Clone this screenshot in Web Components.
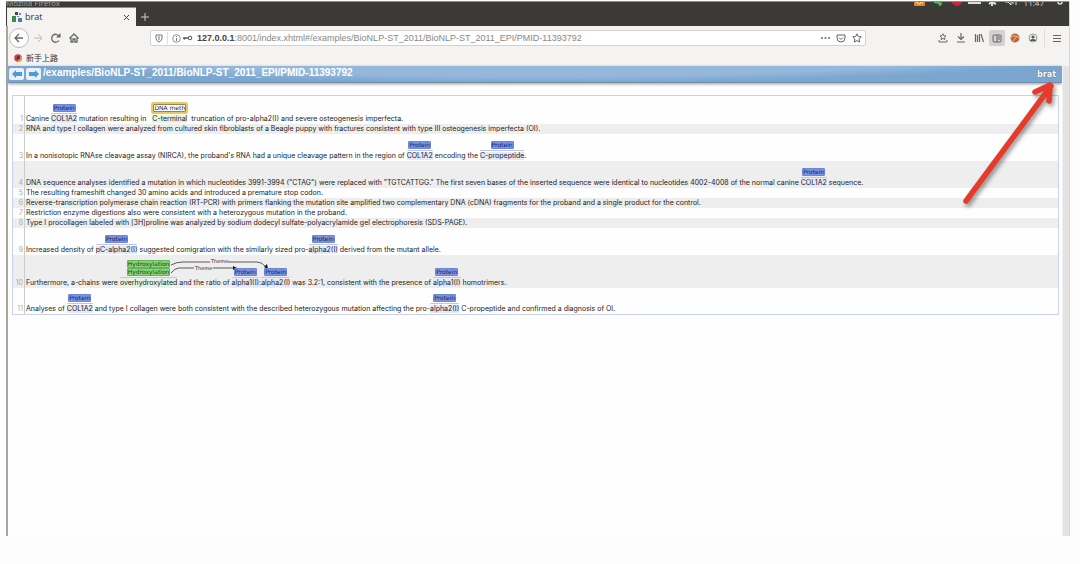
<!DOCTYPE html>
<html lang="en">
<head>
<meta charset="utf-8">
<title>brat</title>
<style>
html{background:#fdfdfd}
body{margin:0;background:#fdfdfd;font-family:"Liberation Sans",Arial,sans-serif;color:#222}
</style>
</head>
<body>
<browser-window>
  <status-strip slot="chrome"></status-strip>
  <tab-strip slot="chrome">brat</tab-strip>
  <nav-bar slot="chrome" host="127.0.0.1" path=":8001/index.xhtml#/examples/BioNLP-ST_2011/BioNLP-ST_2011_EPI/PMID-11393792"></nav-bar>
  <bookmark-bar slot="chrome">新手上路</bookmark-bar>
  <brat-header>/examples/BioNLP-ST_2011/BioNLP-ST_2011_EPI/PMID-11393792</brat-header>
  <brat-document>
    <doc-line n="1" size="first">Canine <span-mark tag="Protein">COL1A2</span-mark> mutation resulting in <span-mark tag="DNA meth" kind="selected">C-terminal</span-mark> truncation of pro-alpha2(I) and severe osteogenesis imperfecta.</doc-line>
    <doc-line n="2">RNA and type I collagen were analyzed from cultured skin fibroblasts of a Beagle puppy with fractures consistent with type III osteogenesis imperfecta (OI).</doc-line>
    <doc-line n="3" size="tagged">In a nonisotopic RNAse cleavage assay (NIRCA), the proband's RNA had a unique cleavage pattern in the region of <span-mark tag="Protein">COL1A2</span-mark> encoding the <span-mark tag="Protein">C-propeptide</span-mark>.</doc-line>
    <doc-line n="4" size="tagged">DNA sequence analyses identified a mutation in which nucleotides 3991-3994 ("CTAG") were replaced with "TGTCATTGG." The first seven bases of the inserted sequence were identical to nucleotides 4002-4008 of the normal canine <span-mark tag="Protein">COL1A2</span-mark> sequence.</doc-line>
    <doc-line n="5">The resulting frameshift changed 30 amino acids and introduced a premature stop codon.</doc-line>
    <doc-line n="6">Reverse-transcription polymerase chain reaction (RT-PCR) with primers flanking the mutation site amplified two complementary DNA (cDNA) fragments for the proband and a single product for the control.</doc-line>
    <doc-line n="7">Restriction enzyme digestions also were consistent with a heterozygous mutation in the proband.</doc-line>
    <doc-line n="8">Type I procollagen labeled with [3H]proline was analyzed by sodium dodecyl sulfate-polyacrylamide gel electrophoresis (SDS-PAGE).</doc-line>
    <doc-line n="9" size="tagged">Increased density of <span-mark tag="Protein">pC-alpha2(I)</span-mark> suggested comigration with the similarly sized pro-<span-mark tag="Protein">alpha2(I)</span-mark> derived from the mutant allele.</doc-line>
    <doc-line n="10" size="arcs">Furthermore, a-chains were <span-mark tag="Hydroxylation" kind="event">overhydroxylated</span-mark> and the ratio of <span-mark tag="Protein">alpha1(I)</span-mark>:<span-mark tag="Protein">alpha2(I)</span-mark> was 3.2:1, consistent with the presence of <span-mark tag="Protein">alpha1(I)</span-mark> homotrimers.</doc-line>
    <doc-line n="11" size="last">Analyses of <span-mark tag="Protein">COL1A2</span-mark> and type I collagen were both consistent with the described heterozygous mutation affecting the pro-<span-mark tag="Protein">alpha2(I)</span-mark> C-propeptide and confirmed a diagnosis of OI.</doc-line>
  </brat-document>
</browser-window>
<pointer-arrow></pointer-arrow>

<script>
const define = (name, html, setup) => customElements.define(name, class extends HTMLElement {
  connectedCallback() {
    if (this.shadowRoot) return;
    const t = document.createElement('template');
    t.innerHTML = html;
    this.attachShadow({mode: 'open'}).append(t.content.cloneNode(true));
    if (setup) setup(this, this.shadowRoot);
  }
});

define('browser-window', `
<style>
:host{display:flex;flex-direction:column;margin:1px 10px 28px 6px;min-height:calc(100vh - 29px)}
.frame{flex:1;display:flex;flex-direction:column;border-left:2px solid #aaa69e;border-right:1px solid #f3cdb6}
.view{flex:1;display:flex;background:#fefefe}
main{flex:1;min-width:0}
.scroll{width:6px;background:#e5e3e2;border-left:1px solid #f1f0ef}
</style>
<div class="frame"><slot name="chrome"></slot>
<div class="view"><main><slot></slot></main><div class="scroll"></div></div></div>`);

define('status-strip', `
<style>
:host{display:block;background:#3b3a36;border-top:1px solid #8f8e8b;margin-left:-2px}
.row{display:flex;align-items:flex-end;height:4px;overflow:hidden;font:8px/6px "Open Sans","Noto Sans",sans-serif;color:#aaa8a2;padding-right:5px}
.name{flex:1}
.clock{margin:0 12px 0 6px;color:#ddd}
svg{display:block;overflow:hidden}
</style>
<div class="row"><span class="name">Mozilla Firefox</span>
<svg width="104" height="4" viewBox="0 0 104 4"><rect width="11" height="4" rx="1" fill="#e9862b"/><path d="M2 0l3 2 4-2" stroke="#ffe0b0" fill="none"/><path d="M20 0l5 1 1 3M24 0l4 2" stroke="#48bb52" stroke-width="2" fill="none"/><path d="M37 0h11q-2 4-5 4t-6-4" fill="#cf2434"/><path d="M54 0h13v2H54z" fill="#ddd"/><path d="M78 0v4M75 2l3-2 4 2" stroke="#ddd" stroke-width="2" fill="none"/><path d="M91 0h3l3 3V0M99 0v2M102 0v3" stroke="#ddd" fill="none"/></svg>
<span class="clock">11:47</span>
<svg width="8" height="4" viewBox="0 0 8 4"><circle cx="4" cy="0" r="2" fill="none" stroke="#ddd" stroke-width="1.500"/></svg></div>`);

define('tab-strip', `
<style>
:host{display:flex;align-items:flex-end;height:20px;background:#3b3a36;margin-left:-2px;font:9px/12px "Open Sans","Noto Sans",sans-serif;color:#333}
.tab{display:flex;align-items:center;box-sizing:border-box;width:129px;height:19px;background:#f4f3f2;border-top:1px solid #cf7750;margin-left:1px;padding:0 6px 0 5px;gap:3px}
.name{flex:1}
button{display:flex;padding:0;border:0;background:none}
.add{margin:0 0 5px 5px}
</style>
<div class="tab">
<svg width="10" height="10" viewBox="0 0 10 10"><path d="M3 0h3v3H3z" fill="#445"/><path d="M0 4h4v6H0z" fill="#3b8a4a"/><path d="M6 6h4v4H6z" fill="#477da0"/><path d="M7 1h2v2H7zM5 4h2v1H5z" fill="#789"/></svg>
<span class="name"><slot></slot></span>
<button aria-label="Close tab"><svg width="7" height="7" viewBox="0 0 7 7"><path d="M1 1l5 5M6 1L1 6" stroke="#444"/></svg></button>
</div>
<button class="add" aria-label="New tab"><svg width="8" height="8" viewBox="0 0 8 8"><path d="M4 0v8M0 4h8" stroke="#ccc"/></svg></button>`);

define('nav-bar', `
<style>
:host{display:flex;align-items:center;height:24px;background:#f4f3f2;padding:0 3px 0 1px;color:#333}
button{display:flex;align-items:center;justify-content:center;padding:0;border:0;background:none;width:18px;height:16px;color:#666}
.back{width:20px;height:20px;box-sizing:border-box;border:1px solid #bbb;border-radius:50%;background:#fdfdfd}
svg{fill:none;stroke:currentColor;display:block}
.url{display:flex;align-items:center;flex:1;box-sizing:border-box;height:16px;background:#fff;border:1px solid #d4d2d0;border-radius:2px;margin:0 68px 0 67px;padding:0 0 0 4px;font:9px/12px "Liberation Sans",Arial,sans-serif;color:#777}
.url b{color:#444;font-weight:700;margin-left:4px}
.url svg{flex:none}
input{flex:1;min-width:0;border:0;padding:0;background:none;font:inherit;color:#888;height:12px;outline:0}
.sep{width:1px;height:12px;background:#ddd;margin:0 4px}
.url button{width:16px}
.on{background:#d3d2d1;border-radius:2px;width:16px;margin:0 1px}
.line{width:1px;height:18px;background:#ddd;margin:0 3px 0 2px}
</style>
<button class="back" aria-label="Back"><svg width="10" height="10" viewBox="0 0 10 10"><path d="M9 5H1M5 1L1 5l4 4" stroke-width="1.300"/></svg></button>
<button aria-label="Forward" style="color:#bbb"><svg width="10" height="10" viewBox="0 0 10 10"><path d="M1 5h8M5 1l4 4-4 4"/></svg></button>
<button aria-label="Reload"><svg width="10" height="10" viewBox="0 0 10 10"><path d="M8 7.5A4 4 0 1 1 8 3" stroke-width="1.3"/><path d="M9.500 0v4.500H5z" fill="currentColor" stroke="none"/></svg></button>
<button aria-label="Home"><svg width="10" height="10" viewBox="0 0 10 10"><path d="M.5 5.500L5 1l4.500 4.500M2 5v4h2V6h2v3h2V5" stroke-width="1.300"/></svg></button>
<div class="url">
<svg width="8" height="9" viewBox="0 0 8 9"><path d="M1 1h6v3q0 3-3 4Q1 7 1 4z"/><path d="M4 2v4"/></svg>
<span class="sep"></span>
<svg width="9" height="9" viewBox="0 0 9 9"><circle cx="4.500" cy="4.500" r="3.800" stroke-width=".8"/><path d="M4.500 4v3M4.500 2v1"/></svg>
<svg width="12" height="8" viewBox="0 0 12 8"><path d="M2 4h5M3.500 4v1.500" stroke="#555" stroke-width="1.500"/><circle cx="9" cy="4" r="1.800" stroke="#555"/></svg>
<b></b><input aria-label="Address">
<button aria-label="Page actions"><svg width="11" height="4" viewBox="0 0 11 4"><path d="M1 2h2m1.500 0h2M8 2h2" stroke-width="1.500"/></svg></button>
<button aria-label="Save to Pocket"><svg width="10" height="9" viewBox="0 0 10 9"><path d="M1 1h8v3q0 4-4 4T1 4z"/><path d="M3 3.500l2 2 2-2"/></svg></button>
<button aria-label="Bookmark this page"><svg width="10" height="10" viewBox="0 0 10 10"><path d="M5 .8l1.300 2.700 3 .4L7.100 6l.6 3L5 7.600 2.300 9l.6-3L.7 3.900l3-.4z"/></svg></button>
</div>
<button aria-label="Bookmarks"><svg width="10" height="10" viewBox="0 0 10 10"><path d="M5 .8l1 1.900 2 .3-1.500 1.500.4 2L5 5.500l-1.900 1 .4-2L2 3l2-.3z"/><path d="M1 7v2h8V7"/></svg></button>
<button aria-label="Downloads"><svg width="10" height="10" viewBox="0 0 10 10"><path d="M5 0v6M2 3.500l3 3 3-3M1 9h8" stroke-width="1.200"/></svg></button>
<button aria-label="Library"><svg width="10" height="10" viewBox="0 0 10 10"><path d="M1.500 1v8M3.500 2v7M5.500 1v8M7 1l2.500 8" stroke-width="1.200"/></svg></button>
<button class="on" aria-label="Sidebars"><svg width="10" height="9" viewBox="0 0 10 9"><rect x="1" y="1" width="8" height="7" rx="1"/><path d="M5 1v7M6 3h2M6 5h2"/></svg></button>
<button aria-label="Extension"><svg width="10" height="10" viewBox="0 0 10 10"><circle cx="5" cy="5" r="4.500" fill="#bd6738" stroke="none"/><path d="M1 4q4-3 8 1M3 8l4-5" stroke="#f0bd88"/></svg></button>
<button aria-label="Account"><svg width="10" height="10" viewBox="0 0 10 10"><circle cx="5" cy="5" r="4" stroke="#999"/><circle cx="5" cy="4" r="1.600" fill="#555" stroke="none"/><path d="M2 8q0-2 3-2t3 2z" fill="#555" stroke="none"/></svg></button>
<span class="line"></span>
<button aria-label="Menu"><svg width="8" height="8" viewBox="0 0 8 8"><path d="M0 1.500h8M0 4.500h8M0 7.500h8"/></svg></button>`, (h, r) => {
  r.querySelector('b').textContent = h.getAttribute('host');
  r.querySelector('input').value = h.getAttribute('path');
});

define('bookmark-bar', `
<style>
:host{display:flex;align-items:center;height:16px;background:#f4f3f2;padding-left:6px;font:8px/12px "Noto Sans CJK SC",sans-serif;color:#333}
a{display:flex;align-items:center;gap:4px;color:inherit;text-decoration:none}
</style>
<a href="#start"><svg width="8" height="8" viewBox="0 0 8 8"><circle cx="4" cy="4" r="3.800" fill="#dd3b3b"/><circle cx="4.500" cy="4" r="2" fill="#35406e"/><path d="M4 8q4 0 4-4L6 2q1 3-2 4z" fill="#f09a2c"/></svg><span><slot></slot></span></a>`);

define('brat-header', `
<style>
:host{display:flex;align-items:center;height:17px;background:radial-gradient(ellipse at 50% -60%,#94b8db 55%,#7aa6d0 72%);border-bottom:1px solid #7090ae;box-shadow:0 1px 3px #999;box-sizing:border-box;padding:0 6px 0 1px;gap:2px;color:#fff}
button{display:flex;align-items:center;justify-content:center;padding:0;width:15px;height:12px;border:0;border-radius:2px;background:#e8f1fa}
h1{flex:1;margin:0;padding-bottom:2px;font:bold 10px/12px "Liberation Sans",Arial,sans-serif}
.logo{font:bold 9px/12px "DejaVu Sans Condensed","DejaVu Sans",sans-serif;text-shadow:0 0 1px #345}
</style>
<button aria-label="Previous document"><svg width="10" height="8" viewBox="0 0 10 8"><path d="M0 4l4-4v2h6v4H4v2z" fill="#4d9ad8"/></svg></button>
<button aria-label="Next document"><svg width="10" height="8" viewBox="0 0 10 8"><path d="M10 4L6 0v2H0v4h6v2z" fill="#4d9ad8"/></svg></button>
<h1><slot></slot></h1><span class="logo">brat</span>`);

define('brat-document', `
<style>:host{display:block;margin:12px 3px 0 4px;border:1px solid #c9d2f0}</style><slot></slot>`);

define('doc-line', `
<style>
:host{display:flex;align-items:flex-end;height:10px;font:7px/10px Inter,"Liberation Sans",sans-serif;white-space:nowrap;position:relative}
:host([size=first]){height:28px}
:host([size=tagged]){height:27px}
:host([size=arcs]){height:33px}
:host([size=last]){height:26px}
.n{width:10px;align-self:stretch;display:flex;align-items:flex-end;justify-content:flex-end;color:#aaa;border-right:1px solid #ccc;margin-right:1px;padding-right:1px}
:host(.even){background:#eee}
</style>
<span class="n"></span><div><slot></slot></div>`, (h, r) => {
  const n = h.getAttribute('n');
  r.querySelector('.n').textContent = n;
  if (n % 2 === 0) h.classList.add('even');
});

define('span-mark', `
<style>
:host{display:inline-block;position:relative;background:#e3e8fa;line-height:8px;color:#222}
:host([kind=event]){background:#e4f4e0}
:host([kind=selected]){background:#e4f4e0;margin:0 2px 0 4px}
.over{position:absolute;left:-20px;right:-20px;bottom:11px;display:flex;flex-direction:column;align-items:center}
.tag{box-sizing:border-box;height:8px;border:1px solid #6e85d4;border-radius:1px;background:#7b94e4;font:6px/6px "DejaVu Sans",sans-serif;color:#16205a}
.brace{position:absolute;left:0;right:0;bottom:9px;height:1px;background:#bcc6ea;border-radius:1px}
:host([kind=event]) .tag{background:#85d87c;border-color:#62b45a;color:#143c14}
:host([kind=event]) .brace{background:#aed8aa}
:host([kind=selected]) .tag{background:#fff;border:1px solid #8d8560;box-shadow:0 0 0 2px #e6cb58}
svg{position:absolute;overflow:visible}
text{font:5px "DejaVu Sans",sans-serif;fill:#222}
</style>
<slot></slot><span class="brace"></span><div class="over"></div>`, (h, r) => {
  const over = r.querySelector('.over');
  const tag = () => { const s = document.createElement('span'); s.className = 'tag'; s.textContent = h.getAttribute('tag'); over.append(s); };
  tag();
  if (h.getAttribute('kind') === 'event') {
    tag();
    over.insertAdjacentHTML('beforeend', '<svg width="102" height="20" viewBox="0 0 102 20" style="left:calc(50% + 22px);bottom:0"><g fill="none" stroke="#333" stroke-width=".8"><path d="M0 9Q5 6 12 6H39M57 6H86Q91 6 95 11M0 17Q4 12 8 12H23M42 12H62"/></g><path d="M97 13l-4-2 3-3zM66 12l-4-2v4z" fill="#111"/><text x="40" y="7">Theme</text><text x="24" y="14">Theme</text></svg>');
  }
});

define('pointer-arrow', `
<style>:host{position:absolute;right:14px;top:78px;width:110px;height:136px;pointer-events:none}svg{display:block;filter:drop-shadow(2px 3px 2px #0006)}</style>
<svg width="110" height="136" viewBox="956 78 110 136"><path d="M966 201L1051 86M1035 92L1050 85L1049 101" fill="none" stroke="#e63a2a" stroke-width="5.500" stroke-linecap="round" stroke-linejoin="round"/></svg>`);
</script>
</body>
</html>
